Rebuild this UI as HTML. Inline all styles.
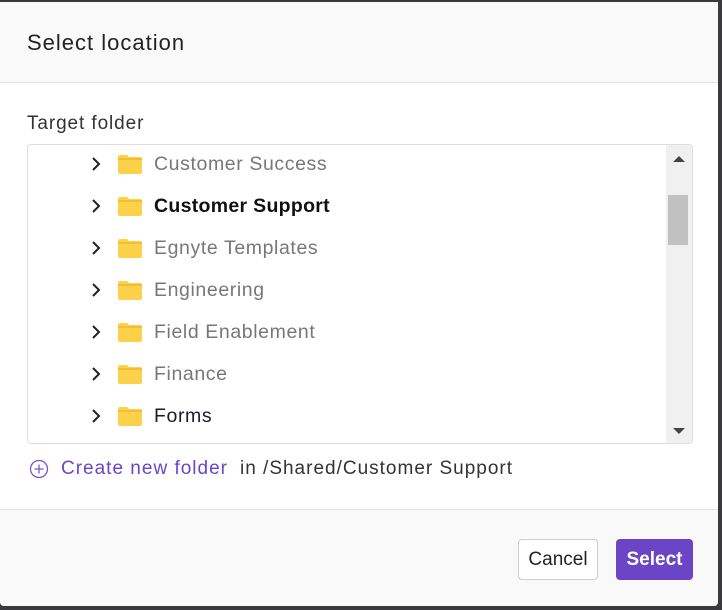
<!DOCTYPE html>
<html><head><style>
*{box-sizing:border-box;margin:0;padding:0}
body{width:722px;height:610px;background:#3a3a3c;position:relative;overflow:hidden;font-family:"Liberation Sans",sans-serif}
.dlg{position:absolute;left:0;top:2px;width:718px;height:604px;background:#fff;border-radius:0 0 4px 4px;overflow:hidden}
.hd{height:81px;background:#f9f9f9;border-bottom:1px solid #e2e2e2;padding:28px 27px;font-size:22px;letter-spacing:1px;color:#222}
.lbl{position:absolute;left:27px;top:111px;font-size:19px;letter-spacing:0.9px;color:#333}
.tree{position:absolute;left:27px;top:142px;width:666px;height:300px;border:1px solid #ddd;border-radius:4px;overflow:hidden}
.row{position:absolute;left:0;height:42px;width:640px;display:flex;align-items:center}
.row svg{position:absolute}
.row span{position:absolute;left:126px;font-size:19.5px;letter-spacing:0.6px;color:#777}
.sb{position:absolute;right:0;top:0;width:26px;height:100%;background:#f0f0f0}
.th{position:absolute;left:2px;top:50px;width:20px;height:50px;background:#c1c1c1}
.cr{position:absolute;left:27px;top:456px;font-size:19px;letter-spacing:1px;color:#333;display:flex;align-items:center}
.ft{position:absolute;left:0;top:507px;width:718px;height:97px;background:#f9f9f9;border-top:1px solid #e2e2e2}
.btn{position:absolute;top:29px;height:41px;border-radius:4px;font-size:19px;display:flex;align-items:center;justify-content:center}
</style></head><body>
<div class="dlg">
<div class="hd">Select location</div>
<div class="lbl">Target folder</div>
<div class="tree">
<div class="row" style="top:-2px"><svg style="left:62px" width="12" height="16"><path d="M3 2l6 6-6 6" stroke="#222" stroke-width="2" fill="none"/></svg><svg style="left:89px" width="26" height="22"><path d="M1 4a2 2 0 0 1 2-2h7l2 2h11a2 2 0 0 1 2 2v13a2 2 0 0 1-2 2H3a2 2 0 0 1-2-2z" fill="#fdd149"/><path d="M1 6h24" stroke="#f0b928" stroke-width="1.5"/></svg><span>Customer Success</span></div>
<div class="row" style="top:40px"><svg style="left:62px" width="12" height="16"><path d="M3 2l6 6-6 6" stroke="#222" stroke-width="2" fill="none"/></svg><svg style="left:89px" width="26" height="22"><path d="M1 4a2 2 0 0 1 2-2h7l2 2h11a2 2 0 0 1 2 2v13a2 2 0 0 1-2 2H3a2 2 0 0 1-2-2z" fill="#fdd149"/><path d="M1 6h24" stroke="#f0b928" stroke-width="1.5"/></svg><span style="color:#111;font-weight:bold;letter-spacing:0.3px">Customer Support</span></div>
<div class="row" style="top:82px"><svg style="left:62px" width="12" height="16"><path d="M3 2l6 6-6 6" stroke="#222" stroke-width="2" fill="none"/></svg><svg style="left:89px" width="26" height="22"><path d="M1 4a2 2 0 0 1 2-2h7l2 2h11a2 2 0 0 1 2 2v13a2 2 0 0 1-2 2H3a2 2 0 0 1-2-2z" fill="#fdd149"/><path d="M1 6h24" stroke="#f0b928" stroke-width="1.5"/></svg><span>Egnyte Templates</span></div>
<div class="row" style="top:124px"><svg style="left:62px" width="12" height="16"><path d="M3 2l6 6-6 6" stroke="#222" stroke-width="2" fill="none"/></svg><svg style="left:89px" width="26" height="22"><path d="M1 4a2 2 0 0 1 2-2h7l2 2h11a2 2 0 0 1 2 2v13a2 2 0 0 1-2 2H3a2 2 0 0 1-2-2z" fill="#fdd149"/><path d="M1 6h24" stroke="#f0b928" stroke-width="1.5"/></svg><span>Engineering</span></div>
<div class="row" style="top:166px"><svg style="left:62px" width="12" height="16"><path d="M3 2l6 6-6 6" stroke="#222" stroke-width="2" fill="none"/></svg><svg style="left:89px" width="26" height="22"><path d="M1 4a2 2 0 0 1 2-2h7l2 2h11a2 2 0 0 1 2 2v13a2 2 0 0 1-2 2H3a2 2 0 0 1-2-2z" fill="#fdd149"/><path d="M1 6h24" stroke="#f0b928" stroke-width="1.5"/></svg><span>Field Enablement</span></div>
<div class="row" style="top:208px"><svg style="left:62px" width="12" height="16"><path d="M3 2l6 6-6 6" stroke="#222" stroke-width="2" fill="none"/></svg><svg style="left:89px" width="26" height="22"><path d="M1 4a2 2 0 0 1 2-2h7l2 2h11a2 2 0 0 1 2 2v13a2 2 0 0 1-2 2H3a2 2 0 0 1-2-2z" fill="#fdd149"/><path d="M1 6h24" stroke="#f0b928" stroke-width="1.5"/></svg><span>Finance</span></div>
<div class="row" style="top:250px"><svg style="left:62px" width="12" height="16"><path d="M3 2l6 6-6 6" stroke="#222" stroke-width="2" fill="none"/></svg><svg style="left:89px" width="26" height="22"><path d="M1 4a2 2 0 0 1 2-2h7l2 2h11a2 2 0 0 1 2 2v13a2 2 0 0 1-2 2H3a2 2 0 0 1-2-2z" fill="#fdd149"/><path d="M1 6h24" stroke="#f0b928" stroke-width="1.5"/></svg><span style="color:#1a1a2e">Forms</span></div>
<div class="sb"><svg style="position:absolute;left:7px;top:10px" width="12" height="8"><path d="M0 7L6 1l6 6z" fill="#444"/></svg><div class="th"></div><svg style="position:absolute;left:7px;top:282px" width="12" height="8"><path d="M0 1l6 6 6-6z" fill="#444"/></svg></div>
</div>
<div class="cr"><svg width="20" height="20" style="margin-left:2px;margin-right:12px"><circle cx="10" cy="10" r="8.5" stroke="#7b55d0" stroke-width="1.3" fill="none"/><path d="M10 5.5v9M5.5 10h9" stroke="#7b55d0" stroke-width="1.3"/></svg><span style="color:#6b45c6">Create new folder</span><span style="margin-left:12px">in /Shared/Customer Support</span></div>
<div class="ft">
<div class="btn" style="left:518px;width:80px;border:1px solid #ccc;background:#fff;color:#222">Cancel</div>
<div class="btn" style="left:616px;width:77px;background:#6b45c6;color:#fff;font-weight:bold">Select</div>
</div>
</div>
</body></html>
